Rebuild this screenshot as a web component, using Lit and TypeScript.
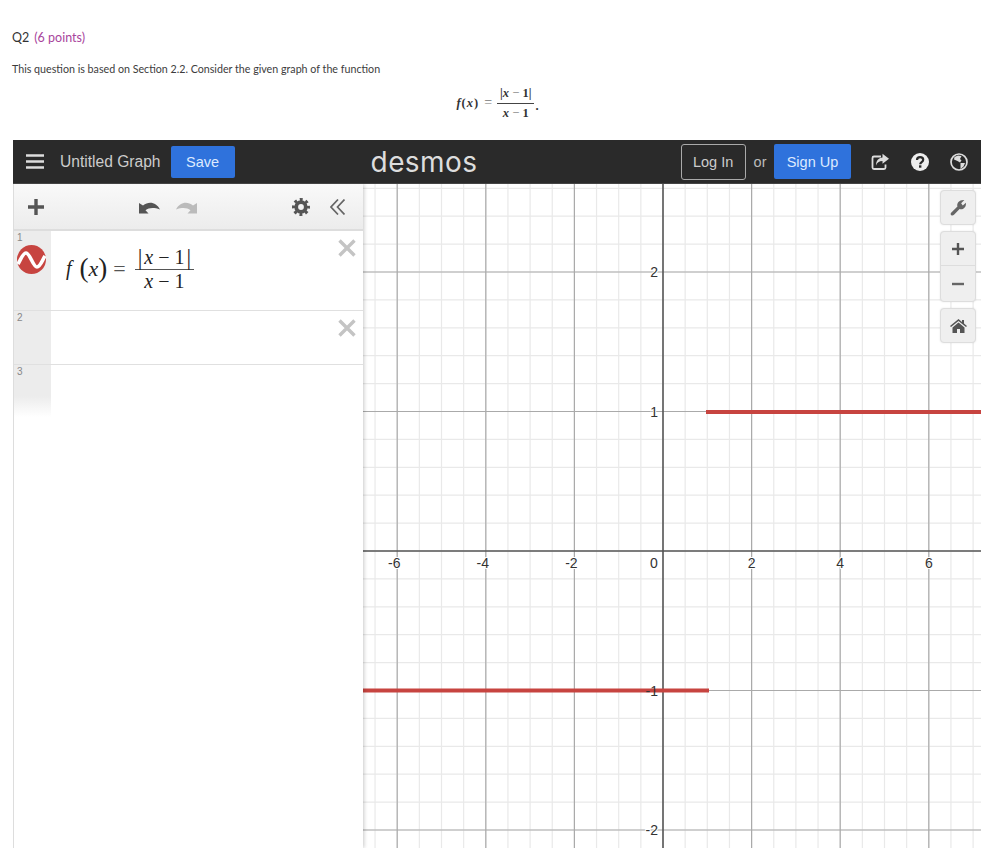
import { LitElement, html, css, svg } from "lit";
import { customElement } from "lit/decorators.js";

const OX = 300; // x=0 in graph coordinates (663 - 363)
const OY = 367; // y=0 in graph coordinates (551 - 184)
const UX = 44.3;
const UY = 139.5;
const W = 618;
const H = 664;

function range(step: number, origin: number, max: number): { p: number; i: number }[] {
  const out: { p: number; i: number }[] = [];
  const lo = Math.ceil((0 - origin) / step);
  const hi = Math.floor((max - origin) / step);
  for (let i = lo; i <= hi; i++) out.push({ p: origin + i * step, i });
  return out;
}

@customElement("app-root")
export class AppRoot extends LitElement {
  static styles = css`
    :host { display: block; width: 1008px; height: 852px; background: #fff; overflow: hidden; font-family: "Liberation Sans", Arial, sans-serif; }
    .question { height: 140px; box-sizing: border-box; padding: 30px 0 0 12px; font-family: "Lato", "Open Sans", sans-serif; }
    .qhead { font-size: 12.5px; line-height: 15px; color: #333; display: flex; gap: 5px; }
    .pts { color: #a8449c; }
    .qtext { margin-top: 17px; font-size: 10.7px; line-height: 14px; color: #3c3c3c; }
    .qmath { margin-top: 10px; display: flex; justify-content: center; align-items: center; padding-right: 25px; font-family: "Liberation Serif", serif; font-weight: 700; font-size: 12.5px; color: #333; }
    .qfn { letter-spacing: 1px; }
    .qmath .eq { font-weight: 400; color: #777; margin: 0 5px; font-size: 14px; }
    .qfrac { display: flex; flex-direction: column; align-items: center; line-height: 14px; }
    .qnum { border-bottom: 1px solid #444; padding: 0 3px 3px; }
    .qden { padding-top: 2px; }
    .light { font-weight: 400; color: #777; }
    .dot { align-self: center; margin-left: 1px; margin-top: 6px; }

    .calc { margin-left: 13px; width: 968px; height: 708px; display: flex; flex-direction: column; }
    .bar { height: 44px; flex: none; background: #2a2a2a; display: flex; align-items: center; color: #ddd; font-size: 15px; box-sizing: border-box; padding-right: 13px; border-bottom: 1px solid #444; }
    .menu { margin-left: 13px; width: 18px; height: 15px; flex: none; }
    .title { margin-left: 16px; color: #ccc; font-size: 15.6px; width: 101px; white-space: nowrap; }
    .btn { display: flex; align-items: center; justify-content: center; box-sizing: border-box; border-radius: 2px; font-size: 14.5px; flex: none; }
    .save { margin-left: 10px; width: 64px; height: 32px; background: #2f72dc; color: #ddeaff; }
    .logo { margin-left: 136px; font-family: "Inter", "Lato", sans-serif; font-size: 28px; font-weight: 400; letter-spacing: 0.4px; color: #ddd; line-height: 40px; width: 310px; flex: none; }
    .login { width: 65px; height: 36px; border: 1px solid #aaa; color: #ccc; border-radius: 3px; }
    .or { margin: 0 7.5px 0 8px; font-size: 14.5px; color: #bbb; }
    .signup { width: 77px; height: 35px; background: #2f72dc; color: #ddeaff; }
    .baricons { margin-left: 20px; display: flex; gap: 21.5px; align-items: center; }
    .baricons svg { width: 18px; height: 18px; display: block; }

    .body { flex: 1; display: flex; min-height: 0; overflow: hidden; }
    .panel { width: 350px; flex: none; display: flex; flex-direction: column; box-sizing: border-box; border-left: 1px solid #ddd; background: #fff; box-shadow: 1px 0 4px rgba(0,0,0,.22); position: relative; z-index: 1; }
    .tools { height: 47px; flex: none; box-sizing: border-box; display: flex; align-items: center; background: linear-gradient(#f9f9f9, #ececec); border-bottom: 2px solid #ddd; }
    .tools svg { display: block; flex: none; }
    .t-plus { margin-left: 13px; }
    .t-undo { margin-left: 94px; }
    .t-redo { margin-left: 16px; }
    .t-gear { margin-left: 95px; }
    .t-back { margin-left: 20px; }
    .row { display: flex; border-bottom: 1px solid #e0e0e0; box-sizing: border-box; flex: none; }
    .row.r1 { height: 80px; }
    .row.r2 { height: 54px; }
    .row.r3 { height: 52px; border-bottom: 0; }
    .gutter { width: 37px; flex: none; background: #ececec; font-size: 10px; color: #888; padding: 1px 0 0 3px; box-sizing: border-box; line-height: 12px; position: relative; }
    .r3 .gutter { background: linear-gradient(#ececec 60%, #fff 100%); }
    .logoIcon { position: absolute; left: 3px; top: 14px; width: 29px; height: 29px; display: block; }
    .content { flex: 1; position: relative; display: flex; align-items: flex-start; }
    .x { position: absolute; right: 7px; top: 8px; width: 18px; height: 18px; display: block; }
    .expr { margin: 13px 0 0 15px; display: flex; align-items: center; font-family: "Liberation Serif", serif; font-size: 20px; color: #222; }
    .expr i { font-style: italic; }
    .fn { margin-right: 8px; }
    .var { font-size: 22px; }
    .paren { font-size: 27px; font-weight: 400; line-height: 27px; }
    .expr .eqs { margin: 0 9px 0 6px; color: #555; font-size: 22px; }
    .frac { display: flex; flex-direction: column; align-items: center; line-height: 23px; }
    .num { border-bottom: 1px solid #555; padding: 2px 3px 0; display: flex; align-items: center; }
    .num .mid { white-space: pre; padding: 0 2px; }
    .bars { font-size: 23px; line-height: 23px; }

    .graph { flex: 1; position: relative; overflow: hidden; background: #fff; }
    .graph > svg { display: block; }
    .lab { font-family: "Liberation Sans", Arial, sans-serif; font-size: 14px; fill: #333; paint-order: stroke; stroke: #fff; stroke-width: 2px; }
    .lab.bare { stroke: none; }
    .controls { position: absolute; right: 5px; top: 6px; display: flex; flex-direction: column; gap: 6px; }
    .ctl { width: 36px; box-sizing: border-box; background: #efefef; border: 1px solid #ddd; border-radius: 4px; display: flex; flex-direction: column; align-items: center; box-shadow: 0 0 2px rgba(0,0,0,.1); }
    .cell { height: 33px; width: 100%; display: flex; align-items: center; justify-content: center; box-sizing: border-box; }
    .cell + .cell { border-top: 1px solid #ddd; height: 36px; }
    .cell svg { display: block; }
  `;

  private gridSvg() {
    const vMinor = range(UX / 2, OX, W);
    const vMajor = range(UX * 2, OX, W).filter((v) => v.i !== 0);
    const hMinor = range(UY / 5, OY, H);
    const hMajor = range(UY, OY, H).filter((v) => v.i !== 0);
    const xl = [-6, -4, -2, 2, 4, 6];
    const yl = [2, 1, -1, -2];
    return html`<svg width=${W} height=${H} viewBox="0 0 ${W} ${H}">
      ${vMinor.map((v) => svg`<line x1=${v.p} x2=${v.p} y1="0" y2=${H} stroke="#e9e9e9" stroke-width="1.2"/>`)}
      ${hMinor.map((v) => svg`<line x1="0" x2=${W} y1=${v.p} y2=${v.p} stroke="#e9e9e9" stroke-width="1.2"/>`)}
      ${vMajor.map((v) => svg`<line x1=${v.p} x2=${v.p} y1="0" y2=${H} stroke="#aaa" stroke-width="1.2"/>`)}
      ${hMajor.map((v) => svg`<line x1="0" x2=${W} y1=${v.p} y2=${v.p} stroke="#aaa" stroke-width="1.2"/>`)}
      <line x1=${OX} x2=${OX} y1="0" y2=${H} stroke="#555" stroke-width="1.6"/>
      <line x1="0" x2=${W} y1=${OY} y2=${OY} stroke="#555" stroke-width="1.6"/>
      <line x1=${OX + 43} x2=${W} y1=${OY - UY + 0.5} y2=${OY - UY + 0.5} stroke="#c74440" stroke-width="4"/>
      <line x1="0" x2=${OX + 46} y1=${OY + UY} y2=${OY + UY} stroke="#c74440" stroke-width="4"/>
      ${xl.map((n) => svg`<text class="lab" x=${OX + n * UX + (n < 0 ? -3 : 0)} y=${OY + 17} text-anchor="middle">${n}</text>`)}
      <text class="lab" x=${OX - 9} y=${OY + 17} text-anchor="middle">0</text>
      ${yl.map((n) => svg`<text class=${n === -1 ? "lab bare" : "lab"} x=${OX - 5} y=${OY - n * UY + 5} text-anchor="end">${n}</text>`)}
    </svg>`;
  }

  render() {
    return html`
      <div class="question">
        <div class="qhead"><span>Q2</span><span class="pts">(6 points)</span></div>
        <div class="qtext">This question is based on Section 2.2. Consider the given graph of the function</div>
        <div class="qmath">
          <span class="qfn"><i>f</i>(<i>x</i>)</span><span class="eq">=</span>
          <span class="qfrac"><span class="qnum">|<i>x</i> <span class="light">−</span> 1|</span><span class="qden"><i>x</i> <span class="light">−</span> 1</span></span>
          <span class="dot">.</span>
        </div>
      </div>
      <div class="calc">
        <div class="bar">
          <svg class="menu" viewBox="0 0 18 15"><path d="M0 1.5h18M0 7.5h18M0 13.5h18" stroke="#ddd" stroke-width="2.4"/></svg>
          <span class="title">Untitled Graph</span>
          <span class="btn save">Save</span>
          <span class="logo">desmos</span>
          <span class="btn login">Log In</span>
          <span class="or">or</span>
          <span class="btn signup">Sign Up</span>
          <span class="baricons">
            <svg viewBox="0 0 18 18"><path d="M10 3.500H3a1.500 1.500 0 0 0-1.500 1.500v9.500A1.500 1.500 0 0 0 3 16h10a1.500 1.500 0 0 0 1.500-1.500V11.500" fill="none" stroke="#ddd" stroke-width="1.800"/><path d="M11.500 0.800 18 5.800l-6.500 5V8C8 8 6 9.500 5 12.500c0-5 2.500-7.500 6.500-8z" fill="#ddd"/></svg>
            <svg viewBox="0 0 18 18"><circle cx="9" cy="9" r="9" fill="#eee"/><path d="M6 7c0-1.800 1.300-2.800 3.100-2.800S12.200 5.200 12.200 6.800c0 2.300-3 2.300-3 4.400" fill="none" stroke="#2a2a2a" stroke-width="2.200"/><rect x="8" y="12.300" width="2.400" height="2.400" fill="#2a2a2a"/></svg>
            <svg viewBox="0 0 18 18"><circle cx="9" cy="9" r="8" fill="none" stroke="#ddd" stroke-width="1.700"/><path d="M4.500 4 8 2.500l3.500.5-1.500 3 1.500 1.500-1.500 2L7.500 8 4 6.500zM10.500 10h4.500l-1.500 3.500-3 2.500z" fill="#ddd"/></svg>
          </span>
        </div>
        <div class="body">
          <div class="panel">
            <div class="tools">
              <svg class="t-plus" width="18" height="18" viewBox="0 0 18 18"><path d="M9 1v16M1 9h16" stroke="#555" stroke-width="3.400"/></svg>
              <svg class="t-undo" width="21" height="14" viewBox="0 0 21 14"><path d="M0 3v10.500h9.500L6.500 10.300C10 7.500 15 7.500 21 9.500 17.500 3 10.500 0.500 4 5.500z" fill="#555"/></svg>
              <svg class="t-redo" width="21" height="14" viewBox="0 0 21 14"><path d="M21 3v10.500h-9.500l3-3.200C11 7.500 6 7.500 0 9.500 3.500 3 10.500 0.500 17 5.500z" fill="#bbb"/></svg>
              <svg class="t-gear" width="18" height="18" viewBox="0 0 18 18"><circle cx="9" cy="9" r="4.800" fill="none" stroke="#555" stroke-width="3.800"/><circle cx="9" cy="9" r="7.500" fill="none" stroke="#555" stroke-width="3" stroke-dasharray="2.900 2.990" stroke-dashoffset="1.450"/></svg>
              <svg class="t-back" width="15" height="16" viewBox="0 0 15 16"><path d="M8 0.500 1 8l7 7.500M14.500 0.500 7.500 8l7 7.500" fill="none" stroke="#666" stroke-width="1.700"/></svg>
            </div>
            <div class="row r1">
              <div class="gutter">1
                <svg class="logoIcon" viewBox="0 0 29 29"><circle cx="14.500" cy="14.500" r="14.500" fill="#c74440"/><path d="M1 19C4 14 6 8 9 8c4 0 7 14 11 14 3 0 5-6 8-11" fill="none" stroke="#fff" stroke-width="3.600"/></svg>
              </div>
              <div class="content">
                <div class="expr">
                  <i class="fn">f</i><span class="paren">(</span><i class="var">x</i><span class="paren">)</span><span class="eqs">=</span>
                  <span class="frac"><span class="num"><span class="bars">|</span><span class="mid"><i>x</i> − 1</span><span class="bars">|</span></span><span><i>x</i> − 1</span></span>
                </div>
                <svg class="x" viewBox="0 0 18 18"><path d="M1.500 1.500l15 15M16.500 1.500l-15 15" stroke="#c4c4c4" stroke-width="3.400"/></svg>
              </div>
            </div>
            <div class="row r2">
              <div class="gutter">2</div>
              <div class="content"><svg class="x" viewBox="0 0 18 18"><path d="M1.500 1.500l15 15M16.500 1.500l-15 15" stroke="#c4c4c4" stroke-width="3.400"/></svg></div>
            </div>
            <div class="row r3">
              <div class="gutter">3</div>
              <div class="content"></div>
            </div>
          </div>
          <div class="graph">
            ${this.gridSvg()}
            <div class="controls">
              <div class="ctl"><div class="cell"><svg width="17" height="17" viewBox="0 0 16 16"><path d="M1 15c-1-1 0-2 1-3l5-5c-1-3 2-6.500 6.500-6L10.500 4l1.500 2 3-2.500C15.500 8 12 10.500 9 9.500l-5 5c-1 1-2 1.500-3 .5z" fill="#666"/></svg></div></div>
              <div class="ctl">
                <div class="cell"><svg width="12" height="12" viewBox="0 0 12 12"><path d="M6 0v12M0 6h12" stroke="#555" stroke-width="2.400"/></svg></div>
                <div class="cell"><svg width="12" height="12" viewBox="0 0 12 12"><path d="M0 6h12" stroke="#666" stroke-width="2.400"/></svg></div>
              </div>
              <div class="ctl"><div class="cell"><svg width="17" height="14" viewBox="0 0 17 14"><path d="M8.500 0 0 7l1 1 7.500-6 7.500 6 1-1-3-2.500V1h-2v2z" fill="#555"/><path d="M8.500 3.500 2.500 8.500V14h4.500v-4h3v4h4.500V8.500z" fill="#555"/></svg></div></div>
            </div>
          </div>
        </div>
      </div>
    `;
  }
}
